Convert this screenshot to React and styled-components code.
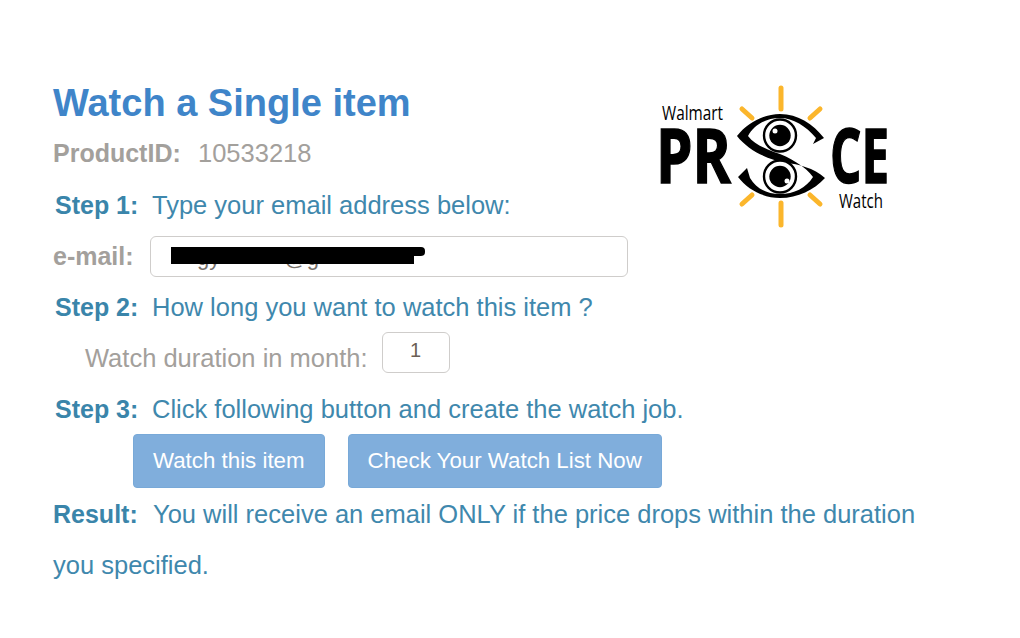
import React from "react";
import styled, { createGlobalStyle } from "styled-components";

const GlobalStyle = createGlobalStyle`
  html, body {
    margin: 0;
    background: #fff;
  }
  body {
    font-family: "Liberation Sans", Arial, sans-serif;
  }
`;

const Page = styled.div`
  width: 1020px;
  height: 638px;
  box-sizing: border-box;
  padding: 78px 0 0 53px;
  overflow: hidden;
`;

const Top = styled.div`
  display: flex;
  align-items: flex-start;
`;

const TopLeft = styled.div`
  width: 575px;
`;

const Title = styled.h1`
  margin: 0;
  height: 50px;
  line-height: 50px;
  font-size: 38px;
  font-weight: bold;
  color: #3f85c9;
`;

const Row = styled.div`
  display: flex;
  align-items: center;
  height: ${(props) => props.height || 51}px;
  font-size: 25.5px;
  color: ${(props) => (props.muted ? "#a3a09c" : "#3f88ad")};
  padding-left: ${(props) => props.indent || 0}px;
  white-space: nowrap;
`;

const Label = styled.b`
  width: ${(props) => props.width}px;
  flex: none;
  font-size: 25px;
  color: ${(props) => (props.muted ? "#a3a09c" : "#3a85aa")};
`;

const TextInput = styled.div`
  width: 478px;
  height: 41px;
  box-sizing: border-box;
  border: 1.5px solid #cfcdcb;
  border-radius: 6px;
  background: #fff;
  position: relative;
  overflow: hidden;
`;

const EmailValue = styled.span`
  position: absolute;
  left: 46px;
  top: 7px;
  font-size: 22px;
  line-height: 28px;
  word-spacing: 58px;
  color: #77706a;
`;

const Redaction = styled.div`
  position: absolute;
  left: 20px;
  top: 10px;
  width: 254px;
  height: 9px;
  background: #000;
  border-radius: 0 4px 4px 0;

  &::after {
    content: "";
    position: absolute;
    left: 0;
    top: 8px;
    width: 243px;
    height: 9px;
    background: #000;
  }
`;

const NumberBox = styled.div`
  width: 68px;
  height: 41px;
  box-sizing: border-box;
  margin-left: 14px;
  margin-bottom: 12px;
  border: 1.5px solid #cfcdcb;
  border-radius: 6px;
  display: flex;
  align-items: center;
  justify-content: center;
  font-size: 20px;
  color: #6b5f55;
  padding-bottom: 4px;
`;

const Buttons = styled.div`
  display: flex;
  align-items: flex-start;
  gap: 23px;
  height: 54px;
  margin-top: -1px;
  margin-bottom: 1px;
  padding-left: 80px;
`;

const Button = styled.button`
  height: 54px;
  padding: 0 19px;
  border: 1px solid #78a9d8;
  border-radius: 4px;
  background: #80aedc;
  color: #fff;
  font-family: inherit;
  font-size: 22.3px;
`;

const Logo = styled.svg`
  flex: none;
  width: 270px;
  height: 170px;
  margin-left: 12px;
  margin-top: -8px;
  overflow: visible;
`;

const PriceLogo = () => (
  <Logo viewBox="0 0 270 170">
    <g stroke="#fbb62c" strokeWidth="5" strokeLinecap="round">
      <line x1="141" y1="18" x2="141" y2="39" />
      <line x1="141" y1="133" x2="141" y2="155" />
      <line x1="102" y1="39" x2="112" y2="48" />
      <line x1="180" y1="39" x2="170" y2="48" />
      <line x1="102" y1="134" x2="112" y2="125" />
      <line x1="180" y1="134" x2="170" y2="125" />
    </g>
    <text x="16" y="113" fontFamily="Open Sans" fontWeight="bold" fontSize="76" stroke="#000" strokeWidth="1.5" textLength="75" lengthAdjust="spacingAndGlyphs">PR</text>
    <text x="190" y="113" fontFamily="Open Sans" fontWeight="bold" fontSize="76" stroke="#000" strokeWidth="1.5" textLength="59" lengthAdjust="spacingAndGlyphs">CE</text>
    <text x="22" y="50" fontFamily="Open Sans" fontSize="20" textLength="61" lengthAdjust="spacingAndGlyphs">Walmart</text>
    <text x="199" y="138" fontFamily="Open Sans" fontSize="20" textLength="44" lengthAdjust="spacingAndGlyphs">Watch</text>
    <path
      fill="#000"
      d="M97 66C108 52 125 44 140 44C158 44 173 54 184 68L173 74L176 68C166 56 153 48 140 48C126 48 114 55 108 66C114 74 124 78 134 82C150 87 166 97 173 107C166 118 154 124 140 124C126 124 116 118 110 108L107 98L98 107C108 120 124 128 140 128C158 128 174 120 185 108C174 98 158 94 146 93C126 89 108 80 97 66Z"
    />
    <circle cx="140" cy="65.5" r="16" fill="#fff" stroke="#000" strokeWidth="2.4" />
    <circle cx="140" cy="65.5" r="10.7" fill="#000" />
    <circle cx="135" cy="61" r="2.5" fill="#fff" />
    <circle cx="140" cy="106.5" r="16" fill="#fff" stroke="#000" strokeWidth="2.4" />
    <circle cx="140" cy="106.5" r="10.7" fill="#000" />
    <circle cx="147" cy="111" r="2.5" fill="#fff" />
  </Logo>
);

const App = () => {
  return (
    <Page>
      <GlobalStyle />
      <Top>
        <TopLeft>
          <Title>Watch a Single item</Title>
          <Row muted>
            <Label muted width={145}>ProductID:</Label>
            10533218
          </Row>
          <Row indent={2} height={52}>
            <Label width={97}>Step 1:</Label>
            Type your email address below:
          </Row>
          <Row muted>
            <Label muted width={97}>e-mail:</Label>
            <TextInput>
              <EmailValue>gy @g</EmailValue>
              <Redaction />
            </TextInput>
          </Row>
        </TopLeft>
        <PriceLogo />
      </Top>
      <Row indent={2}>
        <Label width={97}>Step 2:</Label>
        How long you want to watch this item ?
      </Row>
      <Row muted indent={32}>
        Watch duration in month:
        <NumberBox>1</NumberBox>
      </Row>
      <Row indent={2}>
        <Label width={97}>Step 3:</Label>
        Click following button and create the watch job.
      </Row>
      <Buttons>
        <Button>Watch this item</Button>
        <Button>Check Your Watch List Now</Button>
      </Buttons>
      <Row>
        <Label width={100}>Result:</Label>
        You will receive an email ONLY if the price drops within the duration
      </Row>
      <Row>you specified.</Row>
    </Page>
  );
};

export default App;
